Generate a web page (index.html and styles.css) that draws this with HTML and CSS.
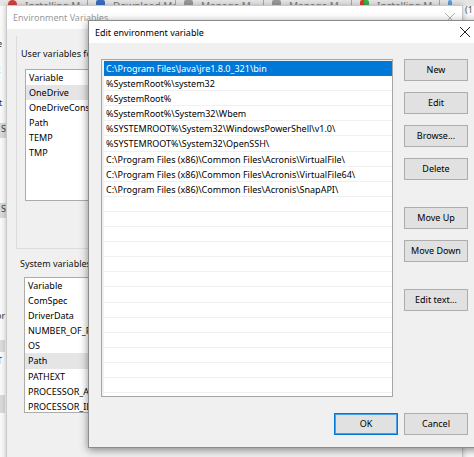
FILE: index.html
```html
<!DOCTYPE html>
<html>
<head>
<meta charset="utf-8">
<link rel="stylesheet" href="styles.css">
</head>
<body>
<div class="desktop">
  <div class="bgapp">
    <div class="tabs">
      <div class="tab"><span class="ticon red"></span><span class="ttext">Installing M</span></div>
      <div class="tab"><span class="ticon blue"></span><span class="ttext">Download Ma</span></div>
      <div class="tab"><span class="ticon gray"></span><span class="ttext">Manage M</span></div>
      <div class="tab"><span class="ticon gray"></span><span class="ttext">Manage M</span></div>
      <div class="tab"><span class="ticon multi"></span><span class="ttext">Installing M</span></div>
      <div class="tab last"><span class="ticon lblue"></span></div>
    </div>
    <div class="sidebits">
      <span class="sb t1">e</span>
      <span class="sb t2">t</span>
      <span class="sb t3">et</span>
      <span class="sb g1">S</span>
      <span class="sb g2">S</span>
      <span class="sb t4">or</span>
      <span class="sb g3"></span>
      <span class="sb t5">T</span>
      <span class="sb g4"></span>
    </div>
    <div class="rightbit">(1</div>
  </div>

  <div class="envwin">
    <div class="titlebar inactive">
      <span class="ttl">Environment Variables</span>
      <svg class="xbtn" width="12" height="12" viewBox="0 0 12 12"><path d="M1 1L11 11M11 1L1 11" stroke="#b0b0b0" stroke-width="1"/></svg>
    </div>
    <div class="envbody">
      <div class="panel">
        <div class="label">User variables for user</div>
        <div class="lv user">
          <div class="lvh">Variable</div>
          <div class="lvr sel">OneDrive</div>
          <div class="lvr">OneDriveConsumer</div>
          <div class="lvr">Path</div>
          <div class="lvr">TEMP</div>
          <div class="lvr">TMP</div>
        </div>
      </div>
      <div class="label sys">System variables</div>
      <div class="lv system">
        <div class="lvh">Variable</div>
        <div class="lvr">ComSpec</div>
        <div class="lvr">DriverData</div>
        <div class="lvr">NUMBER_OF_PROCESSORS</div>
        <div class="lvr">OS</div>
        <div class="lvr sel">Path</div>
        <div class="lvr">PATHEXT</div>
        <div class="lvr">PROCESSOR_ARCHITECTURE</div>
        <div class="lvr">PROCESSOR_IDENTIFIER</div>
      </div>
    </div>
  </div>

  <div class="editdlg">
    <div class="titlebar">
      <span class="ttl">Edit environment variable</span>
      <svg class="xbtn" width="12" height="12" viewBox="0 0 12 12"><path d="M1 1L11 11M11 1L1 11" stroke="#222" stroke-width="1"/></svg>
    </div>
    <div class="dlgbody">
      <div class="list">
        <div class="row selrow">C:\Program Files\Java\jre1.8.0_321\bin</div>
        <div class="row">%SystemRoot%\system32</div>
        <div class="row">%SystemRoot%</div>
        <div class="row">%SystemRoot%\System32\Wbem</div>
        <div class="row">%SYSTEMROOT%\System32\WindowsPowerShell\v1.0\</div>
        <div class="row">%SYSTEMROOT%\System32\OpenSSH\</div>
        <div class="row">C:\Program Files (x86)\Common Files\Acronis\VirtualFile\</div>
        <div class="row">C:\Program Files (x86)\Common Files\Acronis\VirtualFile64\</div>
        <div class="row">C:\Program Files (x86)\Common Files\Acronis\SnapAPI\</div>
      </div>
      <div class="btncol">
        <button class="btn">New</button>
        <button class="btn">Edit</button>
        <button class="btn">Browse...</button>
        <button class="btn">Delete</button>
        <button class="btn gap">Move Up</button>
        <button class="btn">Move Down</button>
        <button class="btn gap">Edit text...</button>
      </div>
    </div>
    <div class="footer">
      <button class="btn def">OK</button>
      <button class="btn">Cancel</button>
    </div>
  </div>
</div>
</body>
</html>
```

FILE: styles.css
```css
* { box-sizing: border-box; }
html, body { margin: 0; padding: 0; }
body {
  width: 474px;
  height: 457px;
  overflow: hidden;
  background: #ffffff;
  font-family: "Noto Sans", "Open Sans", sans-serif;
  font-size: 9px;
  color: #000;
}
.desktop {
  position: relative;
  width: 474px;
  height: 457px;
  overflow: hidden;
}

/* background application */
.bgapp {
  position: absolute;
  inset: 0;
  background: #fbfbfb;
}
.tabs {
  display: flex;
  height: 6px;
  overflow: hidden;
  background: #e6e6e6;
}
.tab {
  width: 88px;
  flex: none;
  display: flex;
  align-items: flex-end;
  gap: 8px;
  padding-left: 8px;
  border-right: 1px solid #a8a8a8;
  height: 6px;
  overflow: hidden;
}
.tab.last { border-right: none; }
.ticon {
  width: 9px;
  height: 9px;
  flex: none;
  border-radius: 2px;
  margin-bottom: -3px;
}
.ticon.red { background: #d64040; border-radius: 50%; }
.ticon.blue { background: #3a6fc0; }
.ticon.gray { background: #9a9a9a; }
.ticon.multi { background: linear-gradient(90deg, #e03a2a 50%, #3fae4b 50%); }
.ticon.lblue { background: #5aa0e0; width: 4px; }
.ttext {
  color: #777;
  font-size: 10px;
  line-height: 10px;
  margin-bottom: -5px;
  white-space: nowrap;
}
.sidebits { position: absolute; left: 0; top: 0; width: 6px; height: 457px; }
.sb {
  position: absolute;
  left: -3px;
  font-size: 9px;
  color: #333;
  line-height: 12px;
}
.t1 { top: 38px; }
.t2 { top: 64px; }
.t3 { top: 97px; left: -6px; }
.g1, .g2 { width: 10px; height: 15px; background: #dadada; color: #444; padding-left: 4px; }
.g1 { top: 123px; }
.g2 { top: 203px; }
.t4 { top: 310px; left: -4px; }
.g3 { top: 340px; width: 8px; height: 12px; background: #dcdcdc; }
.t5 { top: 355px; }
.g4 { top: 395px; width: 8px; height: 18px; background: #dadada; }
.rightbit {
  position: absolute;
  left: 465px;
  top: 3px;
  font-size: 9px;
  color: #555;
}

/* windows */
.envwin {
  position: absolute;
  left: 6px;
  top: 5px;
  width: 457px;
  height: 470px;
  background: #f0f0f0;
  border: 1px solid #c9c9c9;
  box-shadow: 0 0 6px rgba(0,0,0,0.25);
}
.titlebar {
  display: flex;
  align-items: center;
  justify-content: space-between;
  background: #ffffff;
  height: 23px;
  padding: 0 6px 0 6px;
}
.titlebar .ttl { font-size: 9px; color: #000; }
.titlebar.inactive .ttl { color: #9a9a9a; }
.envbody {
  display: flex;
  flex-direction: column;
  padding: 0 0 0 9px;
}
.panel {
  margin-top: 7px;
  height: 213px;
  border-left: 1px solid #dcdcdc;
  border-bottom: 1px solid #dcdcdc;
  padding: 11px 0 0 4px;
}
.label { font-size: 9px; line-height: 14px; color: #111; }
.label.sys { margin-top: 8px; padding-left: 4px; }
.lv {
  background: #fff;
  border: 1px solid #acacac;
  border-right: none;
  margin-left: 4px;
  overflow: hidden;
}
.lv.user { height: 132px; margin-top: 8px; }
.lv.system { height: 136px; margin-top: 6px; margin-left: 8px; }
.lvh, .lvr {
  height: 15.1px;
  line-height: 15px;
  padding-left: 3px;
  white-space: nowrap;
}
.lvr.sel { background: #e5e5e5; }

.editdlg {
  position: absolute;
  left: 88px;
  top: 20px;
  width: 400px;
  height: 428px;
  background: #f0f0f0;
  border: 1px solid #8c8c8c;
  box-shadow: 0 2px 8px rgba(0,0,0,0.45);
}
.editdlg .titlebar { height: 22px; padding-left: 6px; padding-right: 16px; }
.dlgbody {
  display: grid;
  grid-template-columns: 292px 64px;
  column-gap: 11px;
  padding: 16px 0 0 12px;
}
.list {
  height: 338px;
  background-color: #fff;
  border: 1px solid #a6a6a6;
  padding: 1px 0 0 2px;
  background-image: repeating-linear-gradient(180deg, transparent 0, transparent 14.1px, #f1f1f1 14.1px, #f1f1f1 15.1px);
  background-origin: content-box;
  background-clip: content-box;
}
.row {
  height: 15.1px;
  line-height: 15px;
  padding-left: 2px;
  white-space: nowrap;
  overflow: hidden;
  background: #fff;
  border-bottom: 1px solid #f0f0f0;
}
.row.selrow { background: #0078d7; color: #fff; border-bottom-color: #0078d7; }
.btncol {
  display: flex;
  flex-direction: column;
  gap: 11px;
}
.btn {
  width: 64px;
  height: 22px;
  background: #e1e1e1;
  border: 1px solid #adadad;
  font-family: "Noto Sans", "Open Sans", sans-serif;
  font-size: 9px;
  color: #000;
  padding: 0;
  line-height: 20px;
}
.btncol .btn.gap { margin-top: 16px; }
.btn.def { border-color: #0078d7; box-shadow: inset 0 0 0 1px #4aa0e6; }
.footer {
  display: flex;
  justify-content: flex-end;
  gap: 6px;
  padding: 16px 19px 0 0;
}
```
